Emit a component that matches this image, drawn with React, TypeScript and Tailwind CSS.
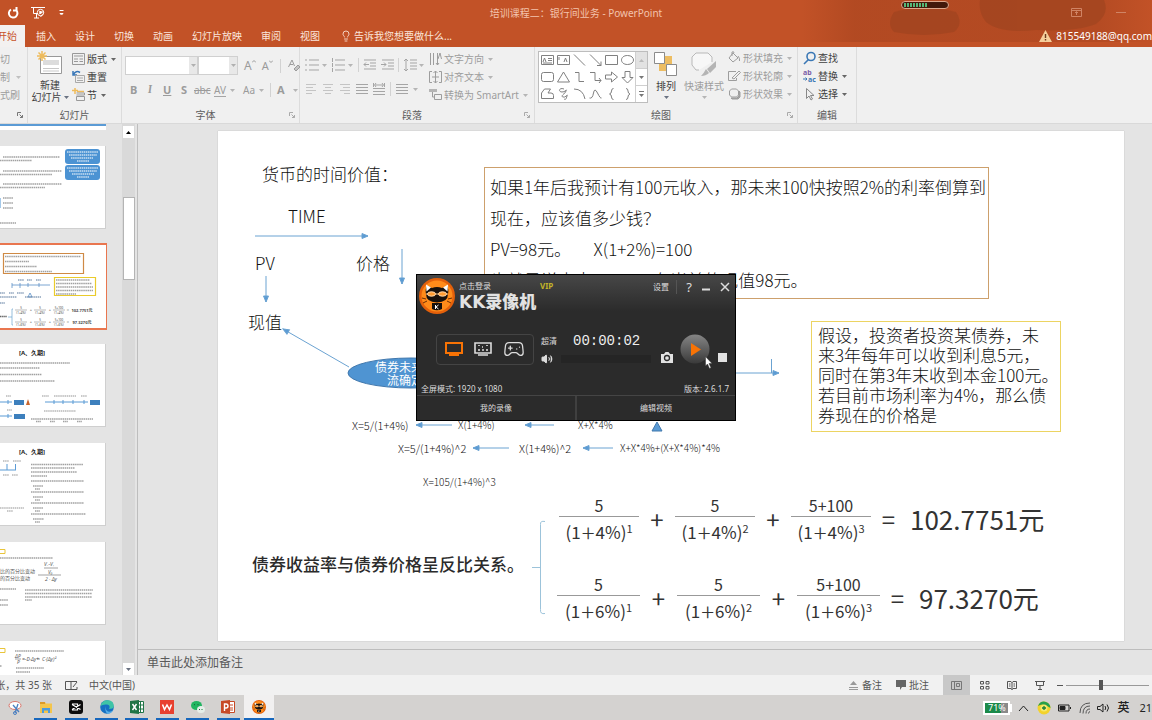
import type { ReactNode } from "react";
import clsx from "clsx";
import { Gamepad2, Lightbulb, Volume2 } from "lucide-react";

const TABS = ["插入", "设计", "切换", "动画", "幻灯片放映", "审阅", "视图"];

function Caret({ className = "text-gray-500" }: { className?: string }) {
  return (
    <svg width="5" height="3" viewBox="0 0 5 3" className={clsx("shrink-0", className)}>
      <path d="M0 0h5L2.5 3z" fill="currentColor" />
    </svg>
  );
}

type GlyphProps = {
  d: string;
  w?: number;
  h?: number;
  className?: string;
  children?: ReactNode;
};

function Glyph({ d, w = 14, h = 14, className, children }: GlyphProps) {
  return (
    <svg
      width={w}
      height={h}
      viewBox={`0 0 ${w} ${h}`}
      fill="none"
      stroke="currentColor"
      className={clsx("shrink-0", className)}
    >
      {children}
      <path d={d} />
    </svg>
  );
}

function Divider() {
  return <span className="h-3.5 w-px bg-[#d2d2d2]" />;
}

function Group({
  label,
  className,
  launcher,
  children,
}: {
  label: string;
  className: string;
  launcher?: boolean;
  children: ReactNode;
}) {
  return (
    <section className={clsx("flex shrink-0 flex-col border-r border-[#dcdcdc]", className)}>
      <div className="flex min-h-0 flex-1">{children}</div>
      <div className="flex h-4 items-center text-[#5c5c5c]">
        <span className="flex-1 text-center">{label}</span>
        {launcher && (
          <Glyph w={6} h={6} d="M.5 4V.5H4M2.5 2.5l3 3M5.5 3v2.5H3" className="mr-1 text-[#aaa]" />
        )}
      </div>
    </section>
  );
}

function RowButton({
  icon,
  label,
  caret,
  muted,
}: {
  icon: ReactNode;
  label: string;
  caret?: boolean;
  muted?: boolean;
}) {
  return (
    <button
      type="button"
      className={clsx(
        "flex h-[18px] items-center gap-0.5 whitespace-nowrap",
        muted ? "text-[#9d9d9d]" : "text-[#3f3f3f]",
      )}
    >
      {icon}
      <span>{label}</span>
      {caret && <Caret className={muted ? "ml-0.5 text-[#b5b5b5]" : "ml-0.5 text-[#666]"} />}
    </button>
  );
}

function TitleBar() {
  return (
    <div className="relative flex h-[25px] items-center justify-center text-[#f3c3ad]">
      <div className="absolute inset-y-0 left-0 flex items-center text-white">
        <Glyph
          w={14}
          h={14}
          className="ml-1.5 [stroke-width:2]"
          d="M5 3.5A4.300 4.300 0 1 0 10 4M10.500 1v3.500H7"
        />
        <Glyph
          w={14}
          h={14}
          className="ml-[11px]"
          d="M0 1.500h14M2.500 2v5.500H7M3 12h5M5.500 8v4M11.500 8.500L9.500 11M10 6l3 0"
        >
          <circle cx="9.500" cy="6.500" r="3.200" />
          <path d="M8.800 5v3l2.200-1.500z" fill="currentColor" />
        </Glyph>
        <Glyph w={5} h={6} className="ml-[14px]" d="M.5.5h4M1 3.500h3L2.500 5z" />
      </div>
      <span className="whitespace-nowrap">培训课程二：银行间业务 - PowerPoint</span>
      <div className="absolute inset-y-0 right-0 flex items-center text-[#d08465]">
        <Glyph w={11} h={9} className="mr-[34px]" d="M.5.5h10v8H.5zM.5 2.500h10M5.500 7V4M4 5l1.500-1.500L7 5" />
        <Glyph w={10} h={9} className="mr-[26px]" d="M0 4.500h10" />
      </div>
      <div className="absolute top-px right-[203px] flex h-2 w-12 items-center gap-px rounded-full border border-[#dda78c] bg-[#43190b] px-0.5">
        {[0, 1, 2, 3, 4, 5, 6, 7].map((bar) => (
          <span key={bar} className="h-1 w-0.5 bg-[#54b878]" />
        ))}
      </div>
    </div>
  );
}

function Tabs() {
  return (
    <nav className="relative flex h-[22px] items-stretch text-[#fbe6dc]">
      <button
        type="button"
        className="flex w-[25px] items-center justify-end overflow-hidden bg-[#f3f1f0] pr-2 whitespace-nowrap text-[#c8532a]"
      >
        开始
      </button>
      <div className="ml-[11px] flex gap-[19px]">
        {TABS.map((tab) => (
          <button key={tab} type="button" className="whitespace-nowrap">
            {tab}
          </button>
        ))}
      </div>
      <button type="button" className="ml-[20px] flex items-center gap-0.5 whitespace-nowrap">
        <Lightbulb size={12} strokeWidth={1.7} />
        告诉我您想要做什么...
      </button>
      <div className="ml-auto flex items-center gap-1 whitespace-nowrap text-white">
        <svg width="13" height="12" viewBox="0 0 13 12">
          <path d="M6.500 0L13 12H0z" fill="#f6cf9c" />
          <path d="M6.500 4v4M6.500 9v1.500" stroke="#6b3a1c" strokeWidth="1.400" />
        </svg>
        815549188@qq.com
      </div>
    </nav>
  );
}

function FontGroup() {
  return (
    <Group label="字体" launcher className="w-[178px]">
      <div className="flex flex-1 flex-col gap-[7px] pt-[9px] pl-[3px] text-[#9b9b9b]">
        <div className="flex h-[19px] items-center">
          {["w-[73px]", "w-10"].map((width, i) => (
            <span key={width} className={clsx("relative flex h-full", width)}>
              <select
                aria-label={i === 0 ? "字体" : "字号"}
                className="w-full appearance-none border border-[#d0d0d0] bg-white"
              />
              <span className="pointer-events-none absolute inset-y-px right-px flex w-2 items-center justify-center bg-[#e8e8e8]">
                <Caret className="text-[#b0b0b0]" />
              </span>
            </span>
          ))}
          <span className="ml-1.5 text-[12px]">A</span>
          <Glyph w={4} h={3} d="M0 2.500L2 .5l2 2" className="mb-2" />
          <span className="ml-1.5 text-[11px]">A</span>
          <Glyph w={4} h={3} d="M0 .5l2 2 2-2" className="mb-2" />
          <span className="ml-[7px] flex items-center gap-[7px]">
            <Divider />
            <Glyph w={12} h={13} d="M.5 8L4 1l2.500 6M2 5.500h3">
              <path d="M6 10l4-4 2 2-4 4z" fill="#c4c4c4" />
            </Glyph>
          </span>
        </div>
        <div className="flex h-4 items-center pl-[5px] text-[11px]">
          <b className="w-[18px]">B</b>
          <i className="w-[15px] font-serif font-bold">I</i>
          <span className="w-[18px] font-bold underline">U</span>
          <span className="w-[13px] font-bold">S</span>
          <span className="w-5 text-[10px] line-through">abc</span>
          <span className="border-b border-[#a5a5a5] text-[10px] leading-3">AV</span>
          <Caret className="ml-1 text-[#b5b5b5]" />
          <span className="ml-2 text-[10px]">Aa</span>
          <Caret className="mr-1.5 ml-1 text-[#b5b5b5]" />
          <Divider />
          <span className="ml-1.5 font-bold">A</span>
          <Caret className="ml-2 text-[#b5b5b5]" />
        </div>
      </div>
    </Group>
  );
}

function ParagraphGroup() {
  return (
    <Group label="段落" launcher className="w-[235px]">
      <div className="flex w-[129px] flex-col gap-2.5 pt-[11px] pl-[5px] text-[#a5a5a5]">
        <div className="flex h-3.5 items-center">
          <Glyph d="M0 2h2M0 7h2M0 12h2M4 2h10M4 7h10M4 12h10" />
          <Caret className="ml-[3px] text-[#b5b5b5]" />
          <Glyph d="M1.500 0v4M1.500 5v4M1.500 10v4M4 2h10M4 7h10M4 12h10" className="ml-1" />
          <Caret className="ml-[3px] mr-[5px] text-[#b5b5b5]" />
          <Divider />
          <Glyph d="M1 2h12M7 5h6M7 8h6M1 11h12M6 6.500H1M3 4.500l-2 2 2 2" className="ml-1" />
          <Glyph d="M1 2h12M7 5h6M7 8h6M1 11h12M0 6.500h5M3 4.500l2 2-2 2" className="ml-1 mr-[3px]" />
          <Divider />
          <Glyph d="M3 1v12M1 3l2-2 2 2M1 11l2 2 2-2M7 2h7M7 5h7M7 8h7M7 11h7" className="ml-1" />
          <Caret className="ml-0.5 text-[#b5b5b5]" />
        </div>
        <div className="flex h-3.5 items-center gap-[5px]">
          <Glyph w={12} d="M1 2.500h10M1 5.500h7M1 8.500h10M1 11.500h6" className="text-[#c4c4c4]" />
          <Glyph w={12} d="M1 2.500h10M3 5.500h6M1 8.500h10M3 11.500h6" className="text-[#c4c4c4]" />
          <Glyph w={12} d="M1 2.500h10M4 5.500h7M1 8.500h10M5 11.500h6" className="text-[#c4c4c4]" />
          <Glyph w={12} d="M0 2.500h12M0 5.500h12M0 8.500h12M0 11.500h12" />
          <Glyph w={12} d="M.5 1v4M11.500 1v4M0 6.500h12M0 9.500h12M0 12.500h12M2 3h8M3 1L1.500 3 3 5M9 1l1.500 2L9 5" />
          <Divider />
          <Glyph w={12} d="M0 2.500h12M0 5.500h12M0 8.500h12M0 11.500h12" />
          <Caret className="text-[#b5b5b5]" />
        </div>
      </div>
      <div className="flex flex-col pt-[3px]">
        <RowButton
          muted
          caret
          label="文字方向"
          icon={<Glyph w={13} d="M1.500 1v12M4.500 1v12M8.500 13V1M7 11l1.500 2 1.500-2M9 7l2-6 1.500 6" />}
        />
        <RowButton
          muted
          caret
          label="对齐文本"
          icon={<Glyph w={13} d="M3 1.500H.5v11H3M10 1.500h2.500v11H10M6.500 1v12M4.500 3l2-2 2 2M4.500 11l2 2 2-2M3 7h7" />}
        />
        <RowButton
          muted
          caret
          label="转换为 SmartArt"
          icon={
            <Glyph w={13} d="M5.500 6.500h7v5h-7zM3.500 4v5H6">
              <path d="M0 1h8v3H0z" fill="#b5b5b5" stroke="none" />
            </Glyph>
          }
        />
      </div>
    </Group>
  );
}

const SHAPES = [
  "M.5 2.500h12v9H.5zM2 9l1.500-4L5 9M7 5.500h4M7 7.500h4M2 10h9",
  "M.5 2.500h12v9H.5zM7 9l1.500-4L10 9M2 4v3",
  "M1 1.500l11 11",
  "M1 1.500l11 11M12 8.500v4H8",
  "M.5 2.500h12v9H.5z",
  "M6.500 2.500c8 0 8 9 0 9s-8-9 0-9z",
  "M2.500 2.500h8q2 0 2 2v5q0 2-2 2h-8q-2 0-2-2v-5q0-2 2-2z",
  "M6.500 2l6 10H.5z",
  "M2 2.500h4v9h5",
  "M1 2.500h5v8h6M10 8l2 2.500-2 2.500",
  "M.5 5h6V2l6 5-6 5V9h-6z",
  "M4 1.500h5v6h3L6.500 13 1 7.500h3z",
  "M.5 11.500V6l3-4h6L7 6h3q2.500 0 2.500 2.500v3z",
  "M7 2C2 0 1 5 5 5s5-4 4-1-6 5-3 6 5-4 4-1-1 4-3 3",
  "M1 2q9 0 11 10",
  "M.5 11q3 1 4-5t4 0 4 5",
  "M8.500 1.500q-2 0-2 2.500t-2 3q2 .5 2 3t2 2.500",
  "M5 1.500q2 0 2 2.500t2 3q-2 .5-2 3t-2 2.500",
];

function DrawingGroup() {
  return (
    <Group label="绘图" launcher className="w-[263px]">
      <div className="mt-1 ml-[3px] flex h-[52px] w-[110px] shrink-0 border border-[#bdbdbd] bg-white">
        <div className="grid flex-1 grid-cols-6 place-items-center">
          {SHAPES.map((d) => (
            <Glyph key={d} w={13} h={14} d={d} className="text-[#808080]" />
          ))}
        </div>
        <div className="flex w-3 flex-col border-l border-[#cfcfcf]">
          <button type="button" aria-label="上一行" className="flex flex-1 items-center justify-center bg-[#e2e2e2]">
            <Caret className="rotate-180 text-[#bbb]" />
          </button>
          <button type="button" aria-label="下一行" className="flex flex-1 items-center justify-center border-y border-[#cfcfcf]">
            <Caret className="text-[#777]" />
          </button>
          <button type="button" aria-label="其他" className="flex flex-1 flex-col items-center justify-center gap-0.5">
            <span className="h-px w-[5px] bg-[#777]" />
            <Caret className="text-[#777]" />
          </button>
        </div>
      </div>
      <button type="button" className="ml-1 flex w-7 flex-col items-center pt-[5px] text-[#3f3f3f]">
        <svg width="24" height="24" viewBox="0 0 24 24" stroke="#8b8b8b">
          <path d="M5 11h8v8H5zM11 4h7v8h-7z" fill="#edbd62" stroke="none" />
          <path d="M.5.5h10v11H.5zM12.500 12.500h10v11h-10z" fill="#fff" />
        </svg>
        <span className="leading-5 whitespace-nowrap">排列</span>
        <Caret />
      </button>
      <button type="button" className="ml-1 flex w-10 flex-col items-center pt-[5px] text-[#9d9d9d]">
        <svg width="26" height="24" viewBox="0 0 26 24" stroke="#b9b9b9" fill="none">
          <path d="M8 18H5L1 13V5l4-4h12l4 4v5" fill="#f7f7f7" />
          <path d="M25 9v6l-6 6-3-4zM15 17l3 4q-3 3-8 3 3-3 5-7z" fill="#b4b4b4" stroke="none" />
        </svg>
        <span className="leading-5 whitespace-nowrap">快速样式</span>
        <Caret className="text-[#b5b5b5]" />
      </button>
      <div className="ml-1 flex flex-col pt-0.5">
        <RowButton
          muted
          caret
          label="形状填充"
          icon={<Glyph w={13} d="M5 2l5 5-5 4-4-4zM4 5V1q2-1 2 1M10 5q2 2 1.500 5" />}
        />
        <RowButton
          muted
          caret
          label="形状轮廓"
          icon={<Glyph w={13} d="M8 2.500H.5v9h8V9M4 9l7-7 1.500 1.500L6 10z" />}
        />
        <RowButton
          muted
          caret
          label="形状效果"
          icon={
            <Glyph w={13} d="M3.500 2h5l2 2v4l-2 2h-5l-2-2V4z">
              <path d="M11 4l1 1v5l-2 2H4l-1-1h6l2-2z" fill="#a8a8a8" />
            </Glyph>
          }
        />
      </div>
    </Group>
  );
}

function Ribbon() {
  return (
    <div className="flex h-[77px] overflow-hidden border-b border-[#d9d9d9] bg-[#f0f0f0]">
      <section className="flex w-7 shrink-0 flex-col border-r border-[#dcdcdc] pt-[3px] whitespace-nowrap text-[#9d9d9d]">
        <span className="h-[18px] leading-[18px]">切</span>
        <span className="flex h-[18px] items-center gap-1.5">
          制 <Caret className="text-[#c0c0c0]" />
        </span>
        <span className="h-[18px] leading-[18px]">式刷</span>
        <Glyph w={6} h={6} d="M.5 4V.5H4M2.500 2.500l3 3M5.500 3v2.500H3" className="mt-auto mr-1 mb-[5px] self-end text-[#777]" />
      </section>

      <Group label="幻灯片" className="w-[94px]">
        <button type="button" className="ml-[3px] flex w-[38px] flex-col items-center pt-1 leading-3 whitespace-nowrap text-[#3f3f3f]">
          <svg width="26" height="24" viewBox="0 0 26 24">
            <path d="M3.500 5.500h21v17h-21z" fill="#fff" stroke="#999" />
            <path d="M6 9h16v5H6z" fill="#dcdcdc" />
            <path d="M6 17.500h16M6 20h16" stroke="#c8c8c8" />
            <path d="M5 0v10M0 5h10M1.500 1.500l7 7M8.500 1.500l-7 7" stroke="#eebb5b" strokeWidth="1.500" />
          </svg>
          <span className="pt-1">新建</span>
          <span className="flex items-center gap-0.5">
            幻灯片 <Caret />
          </span>
        </button>
        <div className="ml-[3px] flex flex-col pt-[3px]">
          <RowButton
            caret
            label="版式"
            icon={<Glyph w={13} d="M.5 1.500h12v11H.5zM2 4h9M2 7h4M2 9.500h4M7.500 7H11M7.500 9.500H11" className="text-[#999]" />}
          />
          <RowButton
            label="重置"
            icon={
              <Glyph w={13} d="M3.500 5.500h9v7h-9zM5 8h6M5 10.500h6" className="text-[#aaa]">
                <path d="M1 1v4h4M1.500 4.500Q4 0 8 2.500" stroke="#3977b8" strokeWidth="1.500" />
              </Glyph>
            }
          />
          <RowButton
            caret
            label="节"
            icon={
              <Glyph w={13} d="M4.500 8.500h8v4h-8zM4.500 5h8v2h-8" className="text-[#999]">
                <path d="M0 2.500h6M3 0v6M5 3.500h7" stroke="#eebb5b" strokeWidth="1.500" />
              </Glyph>
            }
          />
        </div>
      </Group>

      <FontGroup />
      <ParagraphGroup />
      <DrawingGroup />

      <Group label="编辑" className="w-[59px]">
        <div className="flex flex-col pt-0.5 pl-[5px]">
          <RowButton
            label="查找"
            icon={
              <Glyph w={13} d="M5.500 8.500L1 13" className="text-[#3b78b5] [stroke-width:1.600]">
                <circle cx="8" cy="5.500" r="4" />
              </Glyph>
            }
          />
          <RowButton
            caret
            label="替换"
            icon={
              <svg width="13" height="14" viewBox="0 0 13 14" className="font-bold">
                <text x="0" y="6" fontSize="7" fill="#7b5ea8">ab</text>
                <text x="5" y="13" fontSize="7" fill="#3b78b5">ac</text>
                <path d="M0 10h4M2.500 8.500L4 10l-1.500 1.500" stroke="#3b78b5" fill="none" />
              </svg>
            }
          />
          <RowButton
            caret
            label="选择"
            icon={<Glyph w={13} d="M3.500 1.500v10L6 9l2 4 1.500-1-2-3.500H11z" className="text-[#888]" />}
          />
        </div>
      </Group>
    </div>
  );
}

/* rows of unreadably small body copy in the thumbnails */
function Copy({ d, color = "#777" }: { d: string; color?: string }) {
  return <path d={d} stroke={color} strokeWidth="1.300" strokeDasharray="1.500 .6" opacity=".7" />;
}

function Thumb({ selected, className, children }: { selected?: boolean; className?: string; children: ReactNode }) {
  return (
    <button
      type="button"
      className={clsx(
        "block h-[83px] w-[106px] shrink-0 overflow-hidden bg-white",
        selected ? "outline-2 outline-[#e9764f]" : "border-r border-b border-[#cfcfcf]",
        className,
      )}
    >
      <svg width="106" height="83" viewBox="0 0 106 83" fill="none">
        {children}
      </svg>
    </button>
  );
}

function ThumbFormula({ y, rate, total }: { y: number; rate: string; total: string }) {
  return (
    <g fontSize="3" fill="#444" textAnchor="middle">
      {[21, 40, 59].map((x, i) => (
        <g key={x}>
          <text x={x} y={y - 1}>{i === 2 ? "5+100" : "5"}</text>
          <path d={`M${x - 6} ${y}h12`} stroke="#777" strokeWidth=".5" />
          <text x={x} y={y + 3.5}>{`(1+${rate})`}</text>
          {i < 2 && <text x={x + 10} y={y + 1} fontSize="4">+</text>}
        </g>
      ))}
      <text x="68" y={y + 1} fontSize="4">=</text>
      <text x="82" y={y + 2} fontSize="4" fontWeight="bold">{total}</text>
    </g>
  );
}

function Thumbnails() {
  return (
    <div className="flex w-[107px] flex-col gap-4 overflow-hidden">
      <div className="h-1.5 w-[106px] shrink-0 border-t-2 border-[#5b9bd5] bg-white" />
      <Thumb>
        <Copy d="M3 11h57M0 14.500h32M3 25h59M0 28.500h52M3 38h59M0 41.500h45M3 52h10M3 57h10M3 62h10M0 77h16" />
        <rect x="65" y="3" width="35" height="15" rx="3" fill="#4c93d3" />
        <rect x="65" y="19" width="35" height="15" rx="3" fill="#4c93d3" />
        <Copy color="#fff" d="M67 6h31M69 9h28M71 12h22M77 15h12M67 22h31M69 25h28M72 28h22M77 31h12" />
        <path d="M0 52v10" stroke="#4c93d3" />
      </Thumb>
      <Thumb selected>
        <path d="M3.500 8.500h80v20h-80z" stroke="#cf8a45" strokeWidth="1.200" />
        <Copy d="M5 11.500h76M5 16.500h24M5 21.500h32M5 26.500h47" />
        <path d="M12 40h38M12 38v5M20 38v5M28 38v4M39 38v4M30 48l2 4h-4z" stroke="#5b8fc7" strokeWidth=".8" />
        <Copy d="M18 35h6M27 35h5M36 35h5M0 48h5M9 48h5M17 48h7M0 52h17M25 52h16M0 58h5" color="#58789c" />
        <path d="M54.500 32.500h41v18h-41z" stroke="#eacb2b" strokeWidth="1.200" />
        <Copy d="M56 35h34M56 38.500h36M56 42h37M56 45.500h37M56 49h20" />
        <Copy d="M0 71.500h7" color="#222" />
        <path d="M13 64h-1v16h1M12 72H8" stroke="#6aa5cf" strokeWidth=".7" />
        <ThumbFormula y={65} rate="4%" total="102.7751元" />
        <ThumbFormula y={77} rate="6%" total="97.3270元" />
      </Thumb>
      <Thumb>
        <text x="32" y="11" textAnchor="middle" fontSize="6" fontWeight="bold" fill="#222">[A、久期]</text>
        <Copy d="M0 19h70M0 24h40M0 30.500h42M0 37h55" />
        <Copy d="M6 52h5M42 52h7M54 52h22M81 52h6M44 67h32M7 66h5" color="#999" />
        <path d="M0 58h12M8 56v4M45 58h43M54 56v4M63 56v4M73 56v4M84 56v4M0 72h12M8 70v4" stroke="#5b9bd5" />
        <path d="M14 56h10v5H14zM90 56h10v5H90zM14 70h11v5H14z" fill="#3d80bd" />
        <path d="M28 55l2 6h-4z" fill="#c9662e" />
        <Copy d="M31 75h62M36 77.500h5M50 77.500h5M63 77.500h5M77 77.500h5" />
      </Thumb>
      <Thumb>
        <text x="32" y="11" textAnchor="middle" fontSize="6" fontWeight="bold" fill="#222">[A、久期]</text>
        <path d="M0 27h16M7 21v6M15.500 21v6" stroke="#5b9bd5" />
        <Copy d="M3 18h6M13 18h8M3 32h6M12 32h6M0 65h24M7 68h6" color="#999" />
        <Copy d="M31 21.500h52M31 25h44M31 29h46M31 33h16M31 38h53M33 43h10M35 46h5M31 49h53M33 54h10M35 57h5M31 60h53M33 65h10M35 68h5M31 71h55M33 76h11M35 79h5" />
      </Thumb>
      <Thumb>
        <path d="M0 7.500h5v4H0" stroke="#e9c53a" />
        <Copy d="M0 16h53" />
        <g fontSize="5" fill="#555">
          <text x="0" y="31">比的百分比变动</text>
          <text x="0" y="38">的百分比变动</text>
          <text x="44" y="24" fontStyle="italic">V₋-V₊</text>
          <text x="48" y="32" fontStyle="italic">V₀</text>
          <text x="45" y="39" fontStyle="italic">2 · Δy</text>
        </g>
        <path d="M38 33h4M44 26h14M42 33h19" stroke="#666" strokeWidth=".6" />
        <Copy d="M0 47h16M0 58h8M0 63h8M25 48h68M25 51.500h67M25 55h67M25 58h7" />
      </Thumb>
      <Thumb>
        <path d="M0 7.500h5v4H0" stroke="#e9c53a" />
        <Copy d="M15 10h49M0 25h2M16 27h28M16 31h14" />
        <path d="M15 18h6M37 18h3" stroke="#666" strokeWidth=".6" />
        <g fontSize="5" fill="#555" fontStyle="italic">
          <text x="15" y="17">ΔP</text>
          <text x="17" y="23">P</text>
          <text x="22" y="20">=-D·Δy+</text>
          <text x="42" y="20">C·(Δy)²</text>
        </g>
      </Thumb>
    </div>
  );
}

function ThumbScrollbar() {
  return (
    <div className="mr-0.5 ml-auto flex w-[13px] flex-col items-center bg-[#d9d9d9] pt-0.5">
      <button type="button" aria-label="向上滚动" className="flex h-3 w-[11px] items-center justify-center bg-white">
        <Caret className="rotate-180" />
      </button>
      <div className="mt-[59px] h-[83px] w-[12px] border border-[#b4b4b4] bg-white" />
      <button type="button" aria-label="向下滚动" className="mt-auto flex h-3 w-[11px] items-center justify-center bg-white">
        <Caret />
      </button>
    </div>
  );
}

function Fraction({ top, rate, power, className }: { top: string; rate: string; power: string; className: string }) {
  return (
    <div className={clsx("flex flex-col items-center", className)}>
      <span className="text-[16px] leading-5">{top}</span>
      <span className="mt-px h-px w-full bg-[#999]" />
      <span className="mt-[5px] flex items-center text-[17px] leading-5">
        (1<span className="px-px text-[24px] font-light">+</span>
        {rate})<span className="self-start text-[11px] leading-3">{power}</span>
      </span>
    </div>
  );
}

function Equation({
  rate,
  total,
  className,
  bar,
  gap,
}: {
  rate: string;
  total: string;
  className: string;
  bar: string;
  gap: string;
}) {
  const sign = "text-center text-[24px] leading-6";
  return (
    <div className={clsx("absolute flex items-center whitespace-nowrap text-[#333]", className)}>
      <Fraction top="5" rate={rate} power="1" className={bar} />
      <span className={clsx(sign, gap)}>+</span>
      <Fraction top="5" rate={rate} power="2" className={bar} />
      <span className={clsx(sign, gap)}>+</span>
      <Fraction top="5+100" rate={rate} power="3" className={bar} />
      <span className={clsx(sign, "w-[39px] pr-1")}>=</span>
      <span className="text-[26px] leading-8">{total}</span>
    </div>
  );
}

function Arrow({ x1, y1, x2, y2 }: { x1: number; y1: number; x2: number; y2: number }) {
  const angle = (Math.atan2(y2 - y1, x2 - x1) * 180) / Math.PI;
  return (
    <g stroke="#6ba3d2" fill="#5b9bd5">
      <path d={`M${x1} ${y1}L${x2} ${y2}`} />
      <path d="M0 0l-6-2.500v5z" transform={`translate(${x2} ${y2}) rotate(${angle})`} />
    </g>
  );
}

const LABELS = [
  { text: "货币的时间价值：", at: "left-[44px] top-[33px]" },
  { text: "TIME", at: "left-[70px] top-[75px]" },
  { text: "PV", at: "left-[37px] top-[122px]" },
  { text: "价格", at: "left-[138px] top-[122px]" },
  { text: "现值", at: "left-[30px] top-[181px]" },
];

const STEPS = [
  { text: "X=5/(1+4%)", at: "left-[134px] top-[286px] text-[11px]" },
  { text: "X(1+4%)", at: "left-[240px] top-[286px] text-[10px]" },
  { text: "X+X*4%", at: "left-[360px] top-[286px] text-[10px]" },
  { text: "X=5/(1+4%)^2", at: "left-[180px] top-[309px] text-[11px]" },
  { text: "X(1+4%)^2", at: "left-[301px] top-[309px] text-[11px]" },
  { text: "X+X*4%+(X+X*4%)*4%", at: "left-[402px] top-[309px] text-[10px]" },
  { text: "X=105/(1+4%)^3", at: "left-[205px] top-[343px] text-[10px]" },
];

function Slide() {
  return (
    <div className="relative flex-1 overflow-hidden bg-white font-['Noto_Sans_CJK_SC',sans-serif] text-[17px] leading-5 text-[#111] shadow-[0_0_1px_#aaa]">
      <svg width="907" height="510" viewBox="0 0 907 510" fill="none" className="absolute top-0 left-0">
        <Arrow x1={37} y1={105} x2={150} y2={105} />
        <Arrow x1={184} y1={118} x2={184} y2={153} />
        <Arrow x1={48} y1={145} x2={48} y2={171} />
        <Arrow x1={131} y1={236} x2={65} y2={198} />
        <ellipse cx="193" cy="242" rx="63" ry="15" fill="#4f94d2" stroke="#4178ad" />
        <path d="M553.500 228v14" stroke="#6ba3d2" />
        <Arrow x1={517} y1={242} x2={561} y2={242} />
        <Arrow x1={234} y1={294} x2={198} y2={294} />
        <Arrow x1={336} y1={294} x2={307} y2={294} />
        <Arrow x1={291} y1={317} x2={255} y2={317} />
        <Arrow x1={395} y1={317} x2={365} y2={317} />
        <path d="M439 291l5 9h-10z" fill="#5b9bd5" stroke="#4178ad" />
        <path d="M327 390.500q-5-1-4.500 3v85q-.5 5 4.500 4M322 436.500h-8" stroke="#9cc3da" />
      </svg>

      {LABELS.map(({ text, at }) => (
        <span key={text} className={clsx("absolute font-light whitespace-nowrap", at)}>
          {text}
        </span>
      ))}

      <p className="absolute top-[36px] left-[266px] h-[132px] w-[505px] border border-[#cda06c] px-[5px] pt-[3px] leading-[31px] font-light whitespace-pre">
        {"如果1年后我预计有100元收入，那未来100快按照2%的利率倒算到\n现在，应该值多少钱？\nPV=98元。      X(1+2%)=100\n也就是说未来100元，在当前的现值98元。"}
      </p>

      <p className="absolute top-[190px] left-[593px] h-[111px] w-[250px] border border-[#ecd462] px-1.5 pt-[3px] font-light whitespace-pre">
        {"假设，投资者投资某债券，未\n来3年每年可以收到利息5元，\n同时在第3年末收到本金100元。\n若目前市场利率为4%，那么债\n券现在的价格是"}
      </p>

      <p className="absolute top-[229px] left-[157px] w-[72px] text-center text-[12px] leading-[13px] whitespace-pre text-white">
        {"债券未来现金\n流确定性"}
      </p>

      {STEPS.map(({ text, at }) => (
        <span key={text} className={clsx("absolute leading-4 font-light whitespace-nowrap", at)}>
          {text}
        </span>
      ))}

      <span className="absolute top-[423px] left-[34px] font-medium whitespace-nowrap text-[#2b2b2b]">
        债券收益率与债券价格呈反比关系。
      </span>

      <Equation rate="4%" total="102.7751元" className="top-[364px] left-[341px]" bar="w-20" gap="w-9" />
      <Equation rate="6%" total="97.3270元" className="top-[443px] left-[339px]" bar="w-[83px]" gap="w-[37px]" />
    </div>
  );
}

function CatLogo({ size }: { size: number }) {
  return (
    <svg width={size} height={size} viewBox="0 0 36 36" className="shrink-0">
      <circle cx="18" cy="18" r="18" fill="#e4600a" />
      <circle cx="18" cy="18" r="15.500" fill="#ff8b1a" />
      <path d="M7 16Q6 11 8 8l5 2q5-2 10 0l5-2q2 3 1 8 0 8-11 8.500Q7 24 7 16z" fill="#17100c" />
      <path d="M7 6.500l5 3-4.500 4zM29 6.500l-5 3 4.500 4z" fill="#fff" />
      <path d="M7 16h22" stroke="#ffc98a" />
      <ellipse cx="12.500" cy="16" rx="4" ry="2.200" fill="#ff9c33" stroke="#ffd9ae" />
      <ellipse cx="23.500" cy="16" rx="4" ry="2.200" fill="#ff9c33" stroke="#ffd9ae" />
      <path d="M13 25h10v6q-5 2.500-10 0z" fill="#17100c" />
      <path d="M16.500 27v4M19.500 27l-2.500 2 2.500 2" stroke="#fff" fill="none" />
      <path d="M3 20l4 1M4 25l4-2M33 20l-4 1M32 25l-4-2" stroke="#6b2c05" fill="none" />
    </svg>
  );
}

function Recorder() {
  return (
    <div className="absolute top-[274px] left-[416px] flex h-[147px] w-80 flex-col border border-black bg-[#2d2d2d] bg-linear-to-b from-[#474747] to-[#2b2b2b] to-25% text-[8px] leading-3 text-[#dcdcdc]">
      <div className="flex h-11 items-start pl-[2px]">
        <div className="pt-[3px]">
          <CatLogo size={36} />
        </div>
        <div className="ml-1 pt-[5px]">
          <div className="flex gap-[49px]">
            <button type="button">点击登录</button>
            <b className="text-[#c2b428]">VIP</b>
          </div>
          <h1 className="font-['DejaVu_Sans','Noto_Sans_CJK_SC',sans-serif] text-[17px] leading-5 font-black whitespace-nowrap text-[#e2e2e2]">
            KK录像机
          </h1>
        </div>
        <div className="mr-[5px] ml-auto flex items-center pt-1">
          <button type="button">设置</button>
          <span className="mx-[7px] h-3.5 w-px bg-[#555]" />
          <button type="button" className="w-2.5 text-[13px] leading-4">?</button>
          <Glyph w={8} h={10} d="M0 7.500h8" className="ml-2 [stroke-width:2]" />
          <Glyph w={10} h={10} d="M1 1l8 8M9 1L1 9" className="ml-2.5 [stroke-width:1.500]" />
        </div>
      </div>

      <div className="flex h-[60px] items-center pl-[19px]">
        <div className="flex h-[31px] w-[98px] items-center justify-around rounded-sm border border-[#444] px-0.5">
          <Glyph w={18} h={14} d="M1 1h16v10H1zM4 13h10" className="text-[#f87305] [stroke-width:2]" />
          <Glyph w={18} h={14} d="M1 1h16v10H1zM4 13h10M5 3v1M13 3v1M5 7v2M13 7v2M8 5h1M8 8h2" className="[stroke-width:1.600]" />
          <Gamepad2 size={22} strokeWidth={1.4} />
        </div>
        <div className="ml-[7px] flex flex-col gap-1">
          <div className="flex items-center">
            <span className="w-8">超清</span>
            <span className="w-[70px] font-['Liberation_Mono',monospace] text-[14px] leading-4 text-[#eee]">00:00:02</span>
          </div>
          <div className="flex items-center gap-2">
            <Volume2 size={12} fill="currentColor" />
            <div className="h-2 w-[90px] bg-[#252525]" />
          </div>
        </div>
        <svg width="12" height="11" viewBox="0 0 12 11" className="mt-[17px] ml-2.5 shrink-0">
          <path d="M0 2h3l1.500-2h3L9 2h3v9H0z" fill="#e2e2e2" />
          <circle cx="6" cy="6" r="2.500" fill="none" stroke="#2b2b2b" strokeWidth="1.300" />
        </svg>
        <button type="button" aria-label="开始录制" className="ml-[7px] shrink-0">
          <svg width="30" height="30" viewBox="0 0 30 30">
            <defs>
              <linearGradient id="knob" x2="0" y2="1">
                <stop offset="0" stopColor="#858585" />
                <stop offset="1" stopColor="#3a3a3a" />
              </linearGradient>
            </defs>
            <circle cx="15" cy="15" r="14.500" fill="url(#knob)" />
            <path d="M11 9l10 6.500L11 22z" fill="#f87305" />
          </svg>
        </button>
        <button type="button" aria-label="停止" className="mt-[17px] ml-2 size-[9px] bg-[#e2e2e2]" />
      </div>

      <div className="flex h-4 items-end justify-between pr-1.5 pl-1">
        <span>全屏模式: 1920 x 1080</span>
        <span>版本: 2.6.1.7</span>
      </div>
      <div className="flex flex-1 gap-0.5 border-t border-[#454545] bg-[#404040]">
        <button type="button" className="flex-1 bg-[#2b2b2b]">我的录像</button>
        <button type="button" className="flex-1 bg-[#2b2b2b]">编辑视频</button>
      </div>
      <svg width="8" height="13" viewBox="0 0 8 13" className="absolute top-[81px] left-[288px]">
        <path d="M.5.5v9.500l2-2 2 4.500 1.500-.7-2-4.300h3z" fill="#fff" stroke="#333" strokeWidth=".5" />
      </svg>
    </div>
  );
}

function StatusBar() {
  return (
    <footer className="flex h-5 items-center overflow-hidden bg-[#f1f1f1] whitespace-nowrap text-[#555]">
      <div className="flex w-[52px] justify-end">张，共 35 张</div>
      <Glyph w={13} h={11} d="M6 9.500H.5v-8H6zM6 1.500h6M6 9.500h6V7M8 7l4-5" className="ml-[13px]" />
      <span className="ml-[11px]">中文(中国)</span>
      <div className="ml-auto flex h-full items-center">
        <button type="button" className="flex items-center gap-1">
          <Glyph w={9} h={9} d="M0 6.500h9M0 8.500h9" className="text-[#999]">
            <path d="M4.500 0L8 4H1z" fill="currentColor" stroke="none" />
          </Glyph>
          备注
        </button>
        <button type="button" className="ml-3.5 flex items-center gap-[3px]">
          <svg width="10" height="10" viewBox="0 0 10 10">
            <path d="M0 0h10v7H6L4 10V7H0z" fill="#666" />
          </svg>
          批注
        </button>
        <button type="button" aria-label="普通视图" className="ml-3.5 flex h-full w-[27px] items-center justify-center bg-[#c8c8c8]">
          <Glyph w={11} h={9} d="M.5.5h10v8h-10zM3.500 0v9M5.500 2.500h3v3h-3z" className="text-[#777]" />
        </button>
        <Glyph w={10} h={9} d="M.5.5h3v2.500h-3zM6 .5h3v2.500H6zM.5 5.500h3v2.500h-3zM6 5.500h3v2.500H6z" className="ml-2.5" />
        <Glyph w={10} h={9} d="M5 1v8M.5.5H4L5 1.500 6 .5h3.500v7H6L5 8.500 4 7.500H.5zM2 3h1.500M2 5h1.500M6.500 3H8M6.500 5H8" className="ml-[17px]" />
        <Glyph w={10} h={9} d="M0 .5h10M1.500.5v4h7v-4M5 5v3M3 8.500h4" className="ml-[18px]" />
        <span className="ml-3 h-px w-1.5 bg-[#555]" />
        <input
          type="range"
          aria-label="显示比例"
          defaultValue={42}
          className="mr-[3px] ml-[3px] h-2.5 w-[83px] appearance-none bg-[linear-gradient(#999,#999)] bg-[length:100%_1px] bg-center bg-no-repeat [&::-webkit-slider-thumb]:h-2.5 [&::-webkit-slider-thumb]:w-1 [&::-webkit-slider-thumb]:appearance-none [&::-webkit-slider-thumb]:bg-[#555]"
        />
      </div>
    </footer>
  );
}

const APPS: { name: string; art: ReactNode; idle?: boolean }[] = [
  {
    name: "截图工具",
    idle: true,
    art: (
      <>
        <ellipse cx="7" cy="5.500" rx="6" ry="4" fill="#fff" stroke="#d9776d" />
        <path d="M5 5l6 7M10 4L7 13" stroke="#4a7fc0" strokeWidth="1.300" />
        <circle cx="7" cy="13" r="1.500" stroke="#4a7fc0" fill="none" />
      </>
    ),
  },
  {
    name: "文件资源管理器",
    art: (
      <>
        <path d="M1 2h5l1 1.500h6V13H1z" fill="#f4c54b" />
        <path d="M1 2h5v2H1z" fill="#dc9a28" />
        <path d="M3 8h8v5H9v-2.500H5V13H3z" fill="#4c9bdc" />
      </>
    ),
  },
  {
    name: "剪映",
    art: (
      <>
        <rect x="0" y="0" width="14" height="14" rx="3" fill="#0c0c0c" />
        <path d="M11.500 4.500L3 9.500M11.500 9.500L3 4.500M3 4h5.500v1.500M3 10h5.500V8.500" stroke="#fff" strokeWidth="1.200" fill="none" />
      </>
    ),
  },
  {
    name: "Edge",
    art: (
      <>
        <circle cx="7" cy="7" r="6.800" fill="#1670c2" />
        <path d="M.5 6Q2 0 8 .3t5.800 6.500Q13 9 9 9q2-4-2-4.500T.5 6z" fill="#3fc4a6" />
        <path d="M6 6q-1 4 2 5.500 3 .5 5-1Q11 14 7.500 13.800 4 11 6 6z" fill="#55aee8" />
      </>
    ),
  },
  {
    name: "Excel",
    art: (
      <>
        <path d="M8 1.500h5.500v11H8zM8 5h5M8 9h5M10.500 2v10" fill="#fff" stroke="#1f7446" />
        <path d="M0 1l9-1v14l-9-1z" fill="#1f7446" />
        <path d="M2.500 4l4 6M6.500 4l-4 6" stroke="#fff" strokeWidth="1.400" />
      </>
    ),
  },
  {
    name: "WPS",
    art: (
      <>
        <rect width="14" height="14" fill="#e8402f" />
        <path d="M2.500 4.500l2 5L7 5l2.500 4.500 2-5" stroke="#fff" strokeWidth="1.500" fill="none" />
      </>
    ),
  },
  {
    name: "微信",
    art: (
      <>
        <ellipse cx="5.500" cy="5.500" rx="5.500" ry="4.500" fill="#22b561" />
        <ellipse cx="10" cy="9.500" rx="4" ry="3.500" fill="#e6efe9" />
        <path d="M3.500 4v1.200M7 4v1.200M8.500 9v1M11 9v1" stroke="#16703d" />
      </>
    ),
  },
  {
    name: "PowerPoint",
    art: (
      <>
        <path d="M7 1.500h6.500v11H7zM9 5h3M9 8h3M9 10h3" fill="#fff" stroke="#c74a26" />
        <path d="M0 1l9-1v14l-9-1z" fill="#c74a26" />
        <path d="M3.500 11V4H5q2 0 2 2T5 8H3.500" stroke="#fff" strokeWidth="1.400" fill="none" />
      </>
    ),
  },
];

function Taskbar() {
  return (
    <div className="flex h-[25px] shrink-0 items-stretch justify-between overflow-hidden bg-[#d4d2d0]">
      <div className="flex w-[274px] shrink-0">
        {APPS.map(({ name, art, idle }) => (
          <button key={name} type="button" aria-label={name} className="flex flex-1 flex-col items-center justify-between pt-[5px]">
            <svg width="14" height="15" viewBox="0 0 14 15">
              {art}
            </svg>
            <span className={clsx("h-0.5 w-[23px]", !idle && "bg-[#1667bd]")} />
          </button>
        ))}
        <button type="button" aria-label="KK录像机" className="flex flex-1 flex-col items-center justify-between bg-[#f1f0f0] pt-[5px]">
          <CatLogo size={14} />
          <span className="h-0.5 w-full bg-[#1667bd]" />
        </button>
      </div>
      <div className="flex items-center text-[#222]">
        <span className="flex h-3.5 w-[27px] items-center justify-center border-2 border-white bg-linear-to-r from-[#1c8a4a] from-70% to-[#8a8a8a] to-70% text-[9px] leading-3 text-white">
          71%
        </span>
        <span className="h-2 w-0.5 bg-white" />
        <Glyph w={11} h={8} d="M1 7l4.500-5L10 7" className="ml-1.5" />
        <svg width="14" height="14" viewBox="0 0 14 14" className="ml-2">
          <circle cx="7" cy="7" r="6.500" fill="#f3d22b" />
          <path d="M1 5Q3 0 8 .7T13.500 7L10 5Q5 2 1 5z" fill="#27a04b" />
          <circle cx="7" cy="7" r="3.500" fill="#f5e96b" />
          <path d="M7 5v4M5 7h4" stroke="#17803a" strokeWidth="1.300" />
        </svg>
        <Glyph w={13} h={8} d="M.5 1h10.500v6H.5zM12.500 3v2" className="ml-[7px]">
          <path d="M2 2.500h5v3H2z" fill="currentColor" />
        </Glyph>
        <Glyph w={12} h={12} d="M1 11Q1 1 11 1M4 11.500Q4 4 11 4M7 11.500Q7 7 11 7M9.500 11.500q0-1.500 1.500-2" className="ml-2 text-[#555]" />
        <Glyph w={13} h={10} d="M.5 3.500H3L6 1v8L3 6.500H.5zM8 3q1.500 2 0 4M10 1.500q3 3.500 0 7" className="ml-1.5" />
        <span className="ml-[7px] text-[12px] leading-4 font-medium">英</span>
        <span className="ml-2.5 text-[11px] leading-4">21</span>
      </div>
    </div>
  );
}

export default function App() {
  return (
    <div className="relative flex h-screen flex-col overflow-hidden bg-[#e4e4e4] font-['Noto_Sans','Noto_Sans_CJK_SC',sans-serif] text-[10px] leading-4">
      <header className="relative shrink-0 bg-[#c25227]">
        <svg width="350" height="47" viewBox="0 0 350 47" className="absolute top-0 right-0">
          <defs>
            <linearGradient id="haze">
              <stop offset="0" stopColor="#a8441f" stopOpacity="0" />
              <stop offset=".15" stopColor="#a8441f" stopOpacity=".6" />
              <stop offset=".85" stopColor="#a8441f" stopOpacity=".5" />
              <stop offset="1" stopColor="#a8441f" stopOpacity="0" />
            </linearGradient>
          </defs>
          <path d="M0 0h350v42H0z" fill="url(#haze)" />
          <g fill="#a04420" opacity=".7">
            <path d="M92 12q30-8 62 0 8 12-2 20-30 6-60 0-8-8 0-20z" />
            <path d="M178 0h124q6 14-8 24-20 8-60 6-36 4-50-8-8-10-6-22z" />
          </g>
        </svg>
        <TitleBar />
        <Tabs />
      </header>
      <Ribbon />
      <div className="flex min-h-0 flex-1">
        <aside className="flex w-[138px] shrink-0 border-r border-[#bdbdbd]">
          <Thumbnails />
          <ThumbScrollbar />
        </aside>
        <main className="flex min-w-0 flex-1 flex-col">
          <div className="flex min-h-0 flex-1 pt-[7px] pr-7 pb-2 pl-20">
            <Slide />
          </div>
          <div className="h-[26px] shrink-0 border-t border-[#bdbdbd] pl-[9px] text-[12px] leading-[26px] text-[#5a5a5a]">
            单击此处添加备注
          </div>
        </main>
      </div>
      <StatusBar />
      <Taskbar />
      <Recorder />
    </div>
  );
}
